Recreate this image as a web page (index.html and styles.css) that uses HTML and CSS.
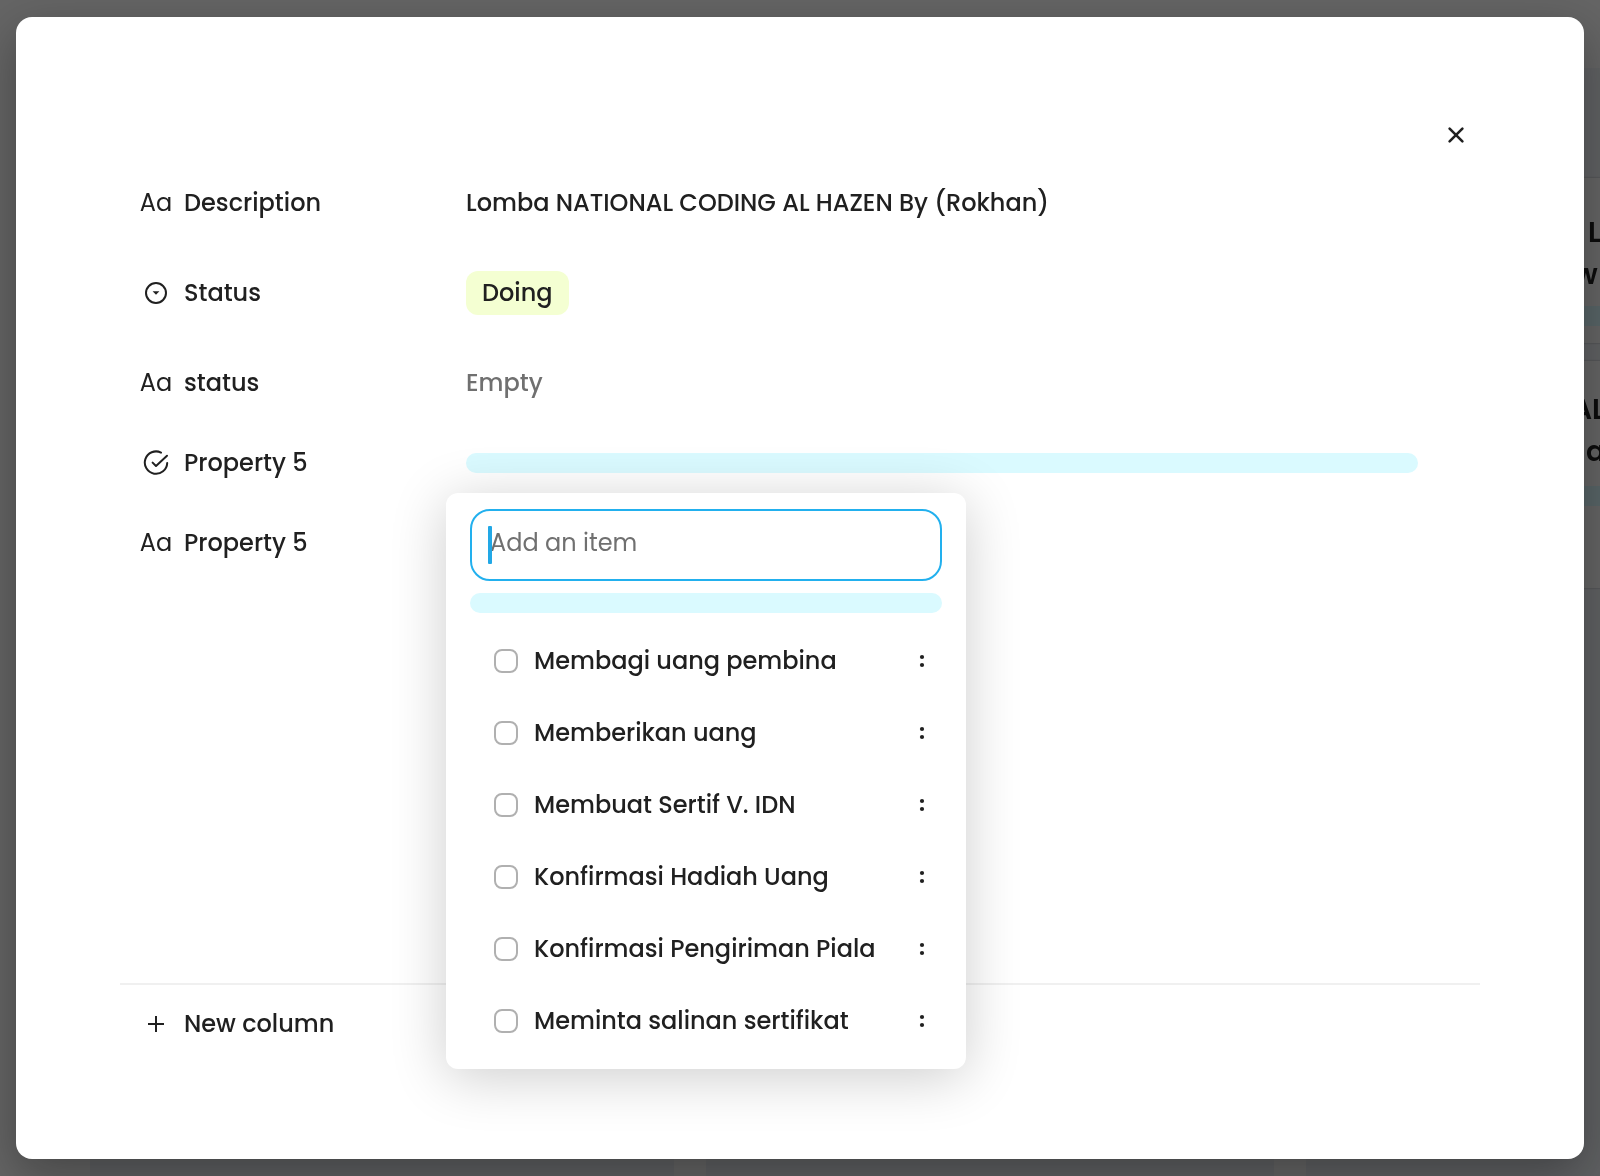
FILE: index.html
```html
<!DOCTYPE html>
<html lang="en">
<head>
<meta charset="utf-8">
<meta name="viewport" content="width=device-width, initial-scale=1">
<title>Item details</title>
<link rel="stylesheet" href="styles.css">
</head>
<body>
<div class="board" aria-hidden="true">
  <div class="column"></div>
  <div class="column"></div>
  <div class="column">
    <div class="card">
      <div class="card-line card-line-end">L</div>
      <div class="card-line">w</div>
      <div class="progress"></div>
    </div>
    <div class="card card-tall">
      <div class="card-line">AL</div>
      <div class="card-line card-line-end">a</div>
      <div class="progress"></div>
    </div>
  </div>
</div>
<div class="overlay">
  <main class="modal" role="dialog" aria-modal="true" aria-label="Item details">
    <header class="modal-header">
      <button class="close" type="button" aria-label="Close">
        <svg width="24" height="24" viewBox="0 0 24 24" fill="none" stroke="currentColor" stroke-width="2.6" stroke-linecap="round"><path d="M5.6 5.6l12.8 12.8M18.4 5.6L5.6 18.4"/></svg>
      </button>
    </header>
    <dl class="properties">
      <div class="property">
        <dt><span class="icon">Aa</span>Description</dt>
        <dd>Lomba NATIONAL CODING AL HAZEN By (Rokhan)</dd>
      </div>
      <div class="property">
        <dt><span class="icon"><svg width="24" height="24" viewBox="0 0 24 24" fill="none" stroke="currentColor" stroke-width="2"><circle cx="12" cy="12" r="10"/><path d="M8.6 10.2h6.8l-3.4 3.6z" fill="currentColor" stroke="none"/></svg></span>Status</dt>
        <dd><span class="tag">Doing</span></dd>
      </div>
      <div class="property">
        <dt><span class="icon">Aa</span>status</dt>
        <dd class="empty">Empty</dd>
      </div>
      <div class="property property-compact">
        <dt><span class="icon"><svg width="26" height="26" viewBox="0 0 26 26" fill="none" stroke="currentColor" stroke-width="2" stroke-linecap="round" stroke-linejoin="round"><path d="M18 2.6A11.2 11.2 0 1 0 24.2 13"/><path d="M9.6 12.6l3.4 3.4L24 5.8"/></svg></span>Property 5</dt>
        <dd class="checklist">
          <div class="progress"></div>
          <section class="popover" aria-label="Checklist">
            <div class="field">
              <input class="field-input" type="text" placeholder="Add an item" aria-label="Add an item">
              <span class="caret"></span>
            </div>
            <div class="progress"></div>
            <ul class="items">
              <li class="item"><label><input type="checkbox">Membagi uang pembina</label><button class="more" type="button" aria-label="More"><svg width="8" height="24" viewBox="0 0 8 24" fill="currentColor"><circle cx="4" cy="8" r="2.1"/><circle cx="4" cy="16" r="2.1"/></svg></button></li>
              <li class="item"><label><input type="checkbox">Memberikan uang</label><button class="more" type="button" aria-label="More"><svg width="8" height="24" viewBox="0 0 8 24" fill="currentColor"><circle cx="4" cy="8" r="2.1"/><circle cx="4" cy="16" r="2.1"/></svg></button></li>
              <li class="item"><label><input type="checkbox">Membuat Sertif V. IDN</label><button class="more" type="button" aria-label="More"><svg width="8" height="24" viewBox="0 0 8 24" fill="currentColor"><circle cx="4" cy="8" r="2.1"/><circle cx="4" cy="16" r="2.1"/></svg></button></li>
              <li class="item"><label><input type="checkbox">Konfirmasi Hadiah Uang</label><button class="more" type="button" aria-label="More"><svg width="8" height="24" viewBox="0 0 8 24" fill="currentColor"><circle cx="4" cy="8" r="2.1"/><circle cx="4" cy="16" r="2.1"/></svg></button></li>
              <li class="item"><label><input type="checkbox">Konfirmasi Pengiriman Piala</label><button class="more" type="button" aria-label="More"><svg width="8" height="24" viewBox="0 0 8 24" fill="currentColor"><circle cx="4" cy="8" r="2.1"/><circle cx="4" cy="16" r="2.1"/></svg></button></li>
              <li class="item"><label><input type="checkbox">Meminta salinan sertifikat</label><button class="more" type="button" aria-label="More"><svg width="8" height="24" viewBox="0 0 8 24" fill="currentColor"><circle cx="4" cy="8" r="2.1"/><circle cx="4" cy="16" r="2.1"/></svg></button></li>
            </ul>
          </section>
        </dd>
      </div>
      <div class="property">
        <dt><span class="icon">Aa</span>Property 5</dt>
        <dd></dd>
      </div>
    </dl>
    <footer class="modal-footer">
      <button class="new-column" type="button"><span class="icon"><svg width="24" height="24" viewBox="0 0 24 24" fill="none" stroke="currentColor" stroke-width="2"><path d="M12 4v16M4 12h16"/></svg></span>New column</button>
    </footer>
  </main>
</div>
</body>
</html>
```
FILE: styles.css
```css
* {
  box-sizing: border-box;
}

body {
  margin: 0;
  min-height: 100vh;
  color: #202020;
  background: #fafafa;
  font: 500 24px/36px Poppins, Inter, sans-serif;
}

button {
  padding: 0;
  border: 0;
  background: none;
  color: inherit;
  font: inherit;
  cursor: pointer;
}

svg {
  display: block;
}

.board {
  position: fixed;
  inset: 0;
  display: flex;
  gap: 32px;
  overflow: hidden;
  padding: 68px 0 0 106px;
}

.column {
  flex: 0 0 568px;
  display: flex;
  flex-direction: column;
  gap: 18px;
  padding: 110px 16px 0;
  background: #edf0f5;
}

.column:first-child {
  flex-basis: 584px;
  margin-left: -16px;
}

.card {
  padding: 34px 16px 17px;
  background: #fafafa;
  box-shadow: 0 0 2px rgba(0, 0, 0, 0.3);
}

.card-tall {
  padding: 28px 14px 82px;
}

.card-line {
  padding-left: 236px;
  font-size: 28px;
  font-weight: 600;
  line-height: 42px;
}

.card-line-end {
  padding-left: 250px;
}

.card .progress {
  margin-top: 10px;
}

.card-tall .progress {
  margin-top: 13px;
}

.overlay {
  position: relative;
  display: flex;
  min-height: 100vh;
  padding: 17px 16px;
  background: rgba(0, 0, 0, 0.6);
}

.modal {
  flex: 1;
  display: flex;
  flex-direction: column;
  padding: 94px 104px 98px;
  border-radius: 16px;
  background: #fff;
  box-shadow: 0 16px 48px rgba(0, 0, 0, 0.32);
}

.modal-header {
  display: flex;
  justify-content: flex-end;
}

.close {
  display: grid;
  place-items: center;
  width: 48px;
  height: 48px;
}

.properties {
  margin: -1px 0 0;
}

.property {
  display: grid;
  grid-template-columns: 326px 1fr;
  align-items: center;
  min-height: 90px;
  padding: 0 62px 0 20px;
}

.property-compact {
  min-height: 70px;
}

.property dt {
  display: flex;
  align-items: center;
  gap: 12px;
}

.property dd {
  margin: 0;
}

.icon {
  display: flex;
  justify-content: center;
  width: 32px;
  font-weight: 400;
}

.tag {
  display: inline-block;
  padding: 4px 16px;
  border-radius: 12px;
  background: #f4ffd2;
}

.property .empty {
  color: #707070;
}

.progress {
  height: 20px;
  border-radius: 10px;
  background: #dafaff;
}

.checklist {
  position: relative;
}

.popover {
  position: absolute;
  top: 40px;
  left: -20px;
  width: 520px;
  padding: 16px 24px 12px;
  border-radius: 12px;
  background: #fff;
  box-shadow: 0 8px 56px rgba(0, 0, 0, 0.2);
}

.field {
  position: relative;
  margin-bottom: 12px;
}

.field-input {
  display: block;
  width: 100%;
  height: 72px;
  padding: 0 18px 6px;
  border: 2px solid #22b0ee;
  border-radius: 20px;
  outline: 0;
  background: #fff;
  color: inherit;
  font: inherit;
  font-weight: 400;
}

.field-input::placeholder {
  color: #707070;
  opacity: 1;
}

.caret {
  position: absolute;
  top: 17px;
  left: 18px;
  width: 4px;
  height: 38px;
  border-radius: 1px;
  background: #22a8e6;
}

.items {
  margin: 12px 0 0;
  padding: 0;
  list-style: none;
}

.item {
  display: flex;
  align-items: center;
  justify-content: space-between;
  height: 72px;
  padding: 0 16px 0 24px;
}

.item label {
  display: flex;
  align-items: center;
  gap: 16px;
  white-space: nowrap;
}

.item input {
  appearance: none;
  width: 24px;
  height: 24px;
  margin: 0;
  border: 2px solid #b0b0b0;
  border-radius: 8px;
  background: #fff;
}

.modal-footer {
  margin-top: auto;
  border-top: 2px solid #f0f0f0;
}

.new-column {
  display: flex;
  align-items: center;
  gap: 12px;
  width: 100%;
  height: 76px;
  padding: 2px 0 0 20px;
}
```
